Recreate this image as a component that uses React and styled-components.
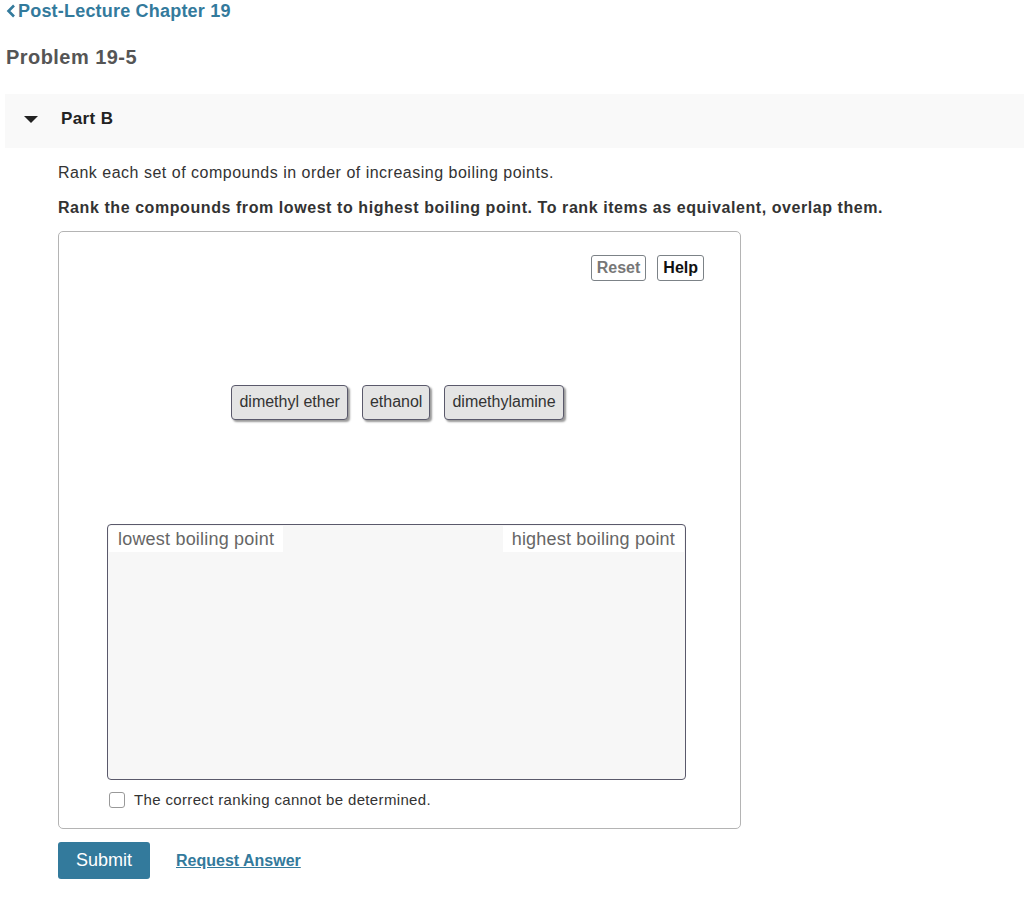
import React from 'react'
import styled, { createGlobalStyle } from 'styled-components'

const colors = {
  link: '#337a9c',
  text: '#333',
  muted: '#666',
  panel: '#f9f9f9',
  edge: '#5a596b',
}

const GlobalStyle = createGlobalStyle`
  body {
    margin: 0;
    background: #fff;
    font-family: "Liberation Sans", Arial, Helvetica, sans-serif;
    color: ${colors.text};
  }
`

const Page = styled.div`
  width: 1024px;
  height: 910px;
  box-sizing: border-box;
  padding-top: 1px;
`

const Breadcrumb = styled.a`
  display: flex;
  align-items: center;
  gap: 2px;
  margin-left: 6px;
  height: 20px;
  color: ${colors.link};
  font-size: 18px;
  letter-spacing: 0.2px;
  font-weight: bold;
  text-decoration: none;
`

const Title = styled.h1`
  margin: 24px 0 0 6px;
  font-size: 20px;
  letter-spacing: 0.45px;
  line-height: 24px;
  font-weight: bold;
  color: #555;
`

const PartHeader = styled.div`
  display: flex;
  align-items: center;
  margin: 25px 0 0 5px;
  height: 54px;
  padding-bottom: 4px;
  box-sizing: border-box;
  background: ${colors.panel};
`

const Caret = styled.span`
  width: 0;
  height: 0;
  margin-left: 19px;
  border-left: 7px solid transparent;
  border-right: 7px solid transparent;
  border-top: 7px solid #222;
`

const PartTitle = styled.span`
  margin-left: 23px;
  font-size: 17px;
  letter-spacing: 0.4px;
  font-weight: bold;
  color: #222;
`

const Body = styled.div`
  padding-left: 58px;
`

const Prompt = styled.p`
  margin: 16px 0 0;
  font-size: 16px;
  letter-spacing: ${props => (props.bold ? '0.57px' : '0.5px')};
  line-height: 18px;
  font-weight: ${props => (props.bold ? 'bold' : 'normal')};
  color: ${colors.text};

  & + & {
    margin-top: 17px;
  }
`

const Workspace = styled.div`
  display: flex;
  flex-direction: column;
  width: 683px;
  height: 598px;
  box-sizing: border-box;
  margin-top: 14px;
  border: 1px solid #b4b4b4;
  border-radius: 5px;
`

const Toolbar = styled.div`
  display: flex;
  justify-content: flex-end;
  gap: 11px;
  padding: 23px 36px 0 0;
`

const ToolButton = styled.button`
  height: 26px;
  padding: 0 5px;
  background: #fff;
  border: 1px solid #7c8287;
  border-radius: 3px;
  font-family: inherit;
  font-size: 16px;
  font-weight: bold;
  color: ${props => (props.dim ? '#777' : '#111')};
`

const Pool = styled.div`
  display: flex;
  justify-content: center;
  gap: 14px;
  margin-top: 104px;
  padding-right: 4px;
`

const Chip = styled.div`
  display: flex;
  align-items: center;
  height: 35px;
  padding: 0 7px 2px;
  box-sizing: border-box;
  background: #e4e4e4;
  border: 1.5px solid ${colors.edge};
  border-radius: 4px;
  box-shadow: 2px 2px 2px rgba(0, 0, 0, 0.4);
  font-size: 16px;
  color: #333;
`

const RankArea = styled.div`
  display: flex;
  justify-content: space-between;
  align-items: flex-start;
  width: 579px;
  height: 256px;
  box-sizing: border-box;
  margin: 104px 0 0 48px;
  padding: 1px;
  background: #f7f7f7;
  border: 1.5px solid ${colors.edge};
  border-radius: 4px;
`

const EndLabel = styled.span`
  padding: 0 9px;
  line-height: 26px;
  background: #fff;
  font-size: 18px;
  letter-spacing: 0.2px;
  color: ${colors.muted};
`

const CheckRow = styled.label`
  display: flex;
  align-items: center;
  gap: 9px;
  margin: 11px 0 0 50px;
  font-size: 15px;
  letter-spacing: 0.35px;
  color: ${colors.text};
`

const Box = styled.span`
  width: 14px;
  height: 14px;
  border: 1px solid #999;
  border-radius: 3px;
  background: #fff;
`

const Actions = styled.div`
  display: flex;
  align-items: center;
  gap: 26px;
  margin-top: 13px;
`

const SubmitButton = styled.button`
  width: 92px;
  height: 37px;
  background: ${colors.link};
  border: none;
  border-radius: 3px;
  font-family: inherit;
  font-size: 18px;
  color: #fff;
`

const TextLink = styled.a`
  font-size: 16px;
  font-weight: bold;
  color: ${colors.link};
  text-decoration: underline;
`

const compounds = ['dimethyl ether', 'ethanol', 'dimethylamine']

export default function App() {
  return (
    <Page>
      <GlobalStyle />
      <Breadcrumb href="#">
        <svg width="10" height="14" viewBox="0 0 10 14">
          <path d="M8 1.5 L2.5 7 L8 12.5" fill="none" stroke={colors.link} strokeWidth="2.6" />
        </svg>
        Post-Lecture Chapter 19
      </Breadcrumb>
      <Title>Problem 19-5</Title>
      <PartHeader>
        <Caret />
        <PartTitle>Part B</PartTitle>
      </PartHeader>
      <Body>
        <Prompt>Rank each set of compounds in order of increasing boiling points.</Prompt>
        <Prompt bold>
          Rank the compounds from lowest to highest boiling point. To rank items as equivalent, overlap them.
        </Prompt>
        <Workspace>
          <Toolbar>
            <ToolButton dim>Reset</ToolButton>
            <ToolButton>Help</ToolButton>
          </Toolbar>
          <Pool>
            {compounds.map(name => (
              <Chip key={name}>{name}</Chip>
            ))}
          </Pool>
          <RankArea>
            <EndLabel>lowest boiling point</EndLabel>
            <EndLabel>highest boiling point</EndLabel>
          </RankArea>
          <CheckRow>
            <Box />
            The correct ranking cannot be determined.
          </CheckRow>
        </Workspace>
        <Actions>
          <SubmitButton>Submit</SubmitButton>
          <TextLink href="#">Request Answer</TextLink>
        </Actions>
      </Body>
    </Page>
  )
}
